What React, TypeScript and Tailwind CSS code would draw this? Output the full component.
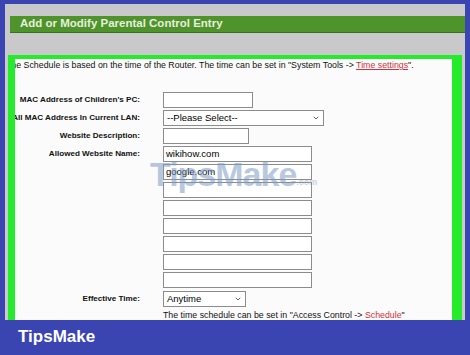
import { ChevronDown } from 'lucide-react';

const font = { fontFamily: '"Liberation Sans", Arial, sans-serif' };

const Field = ({ w, value = '' }: { w: string; value?: string }) => (
    <div className={`${w} h-[16px] border border-[#8c8c8c] bg-white px-[2px] text-[9.5px] leading-[14px] text-black`}>
        {value}
    </div>
);

const Select = ({ w, value }: { w: string; value: string }) => (
    <div className={`${w} h-[16px] border border-[#8c8c8c] bg-white pl-[3px] pr-[3px] flex items-center justify-between text-[9.5px] text-black`}>
        <span>{value}</span>
        <ChevronDown className="w-[8px] h-[8px] text-[#444]" strokeWidth={2.5} />
    </div>
);

const Row = ({ label, children }: { label?: string; children: React.ReactNode }) => (
    <div className="flex items-center h-[18px]">
        <div className="w-[125px] text-[8.1px] font-bold text-[#111] whitespace-nowrap overflow-hidden flex justify-end">
            {label}
        </div>
        <div className="ml-[23px]">{children}</div>
    </div>
);

export default function App() {
    const names = ['wikihow.com', 'google.com', '', '', '', '', '', ''];

    return (
        <div className="w-[470px] h-[355px] overflow-hidden bg-[#3a45b2] flex flex-col" style={font}>
            <div className="h-[320px] pt-[4px] px-[5px] overflow-hidden">
                <div className="h-full bg-[#c9c9cb] flex flex-col">
                    <div className="mt-[12px] ml-[5px] h-[17px] bg-[#4f942b] border-b border-[#3c6f22] flex items-center pl-[10px]">
                        <span className="text-[11.5px] font-bold text-[#e6eedf]">Add or Modify Parental Control Entry</span>
                    </div>
                    <div className="mt-[18px] ml-[5px] h-[2px] bg-[#5a5a5a]" />
                    <div className="mt-[4px] flex-1 pl-[3px] flex">
                        <div className="flex-1 mr-[3px] border-t-[4px] border-l-[7px] border-r-[10px] border-[#24ec2a] bg-[#fbfbfb] overflow-hidden relative">
                            <div className="whitespace-nowrap text-[8.8px] text-[#111] -ml-[9px] mt-[1px] leading-[10px]">
                                The Schedule is based on the time of the Router. The time can be set in "System Tools -&gt;{' '}
                                <span className="text-[#d0303c] underline">Time settings</span>".
                            </div>
                            <div className="mt-[21px] flex flex-col">
                                <Row label="MAC Address of Children's PC:">
                                    <Field w="w-[90px]" />
                                </Row>
                                <Row label="All MAC Address In Current LAN:">
                                    <Select w="w-[161px]" value="--Please Select--" />
                                </Row>
                                <Row label="Website Description:">
                                    <Field w="w-[86px]" />
                                </Row>
                                {names.map((n, i) => (
                                    <Row key={i} label={i === 0 ? 'Allowed Website Name:' : undefined}>
                                        <Field w="w-[149px]" value={n} />
                                    </Row>
                                ))}
                                <div className="h-[1px]" />
                                <Row label="Effective Time:">
                                    <Select w="w-[83px]" value="Anytime" />
                                </Row>
                                <div className="ml-[148px] mt-[1px] text-[8.8px] text-[#111] whitespace-nowrap">
                                    The time schedule can be set in "Access Control -&gt;{' '}
                                    <span className="text-[#d0303c]">Schedule</span>"
                                </div>
                            </div>
                            <div className="absolute left-[135px] top-[98px] flex items-end pointer-events-none opacity-55">
                                <span className="text-[34px] font-bold text-[#7f9cc4] tracking-[-1px] leading-none">TipsMake</span>
                                <span className="text-[9px] font-bold text-[#9fb0c8] mb-[2px]">.com</span>
                            </div>
                        </div>
                    </div>
                </div>
            </div>
            <div className="flex-1 flex items-center pl-[18px] pb-[2px]">
                <span className="text-[17px] font-bold text-white">TipsMake</span>
            </div>
        </div>
    );
}
